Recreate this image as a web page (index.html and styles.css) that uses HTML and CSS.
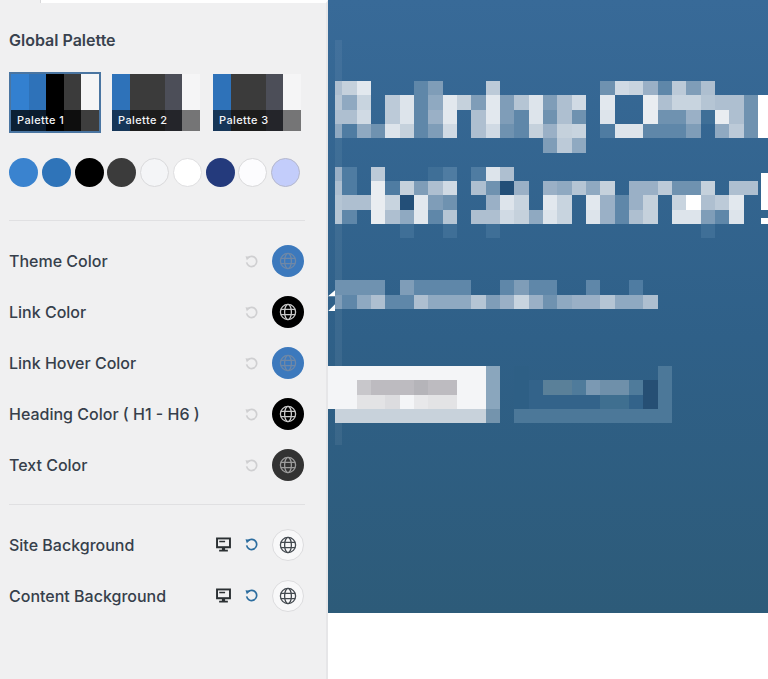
FILE: index.html
```html
<!DOCTYPE html>
<html lang="en">
<head>
    <meta charset="UTF-8">
    <title>Global Palette</title>
    <link rel="stylesheet" href="styles.css">
</head>
<body>
    <svg class="defs" width="0" height="0">
        <symbol id="globe" viewBox="0 0 20 20">
            <g fill="none" stroke="currentColor" stroke-width="1.3">
                <circle cx="10" cy="10" r="7.6"/>
                <ellipse cx="10" cy="10" rx="3.4" ry="7.6"/>
                <path d="M2.8 7.4h14.4M2.8 12.6h14.4"/>
            </g>
        </symbol>
        <symbol id="reset" viewBox="0 0 16 16">
            <path d="M4.2 4.2A5.4 5.4 0 1 1 2.8 9" fill="none" stroke="currentColor" stroke-width="1.8"/>
            <path d="M1.6 2.4l5.2.6-3.8 3.6z" fill="currentColor"/>
        </symbol>
        <symbol id="monitor" viewBox="0 0 16 16">
            <path d="M1 1.5h14v10H9.5v1.4h2.6v1.6H3.9v-1.6h2.6v-1.4H1z" fill="currentColor"/>
            <path d="M2.8 3.2h10.4v6.4H2.8z" fill="#f0f0f1"/>
            <path d="M4 4.5h5.5v1.4H4z" fill="currentColor"/>
        </symbol>
    </svg>

    <div class="page">
        <aside class="panel">
            <h2 class="panel-title">Global Palette</h2>

            <div class="palettes">
                <div class="palette palette-current">
                    <div class="stripes">
                        <span class="c-blue"></span><span class="c-blue2"></span><span class="c-black"></span><span class="c-dark"></span><span class="c-light"></span>
                    </div>
                    <div class="palette-name">Palette 1</div>
                </div>
                <div class="palette">
                    <div class="stripes">
                        <span class="c-blue2"></span><span class="c-dark wide"></span><span class="c-slate"></span><span class="c-light"></span>
                    </div>
                    <div class="palette-name">Palette 2</div>
                </div>
                <div class="palette">
                    <div class="stripes">
                        <span class="c-blue2"></span><span class="c-dark wide"></span><span class="c-slate"></span><span class="c-light"></span>
                    </div>
                    <div class="palette-name">Palette 3</div>
                </div>
            </div>

            <div class="swatches">
                <span class="swatch sw-1"></span>
                <span class="swatch sw-2"></span>
                <span class="swatch sw-3"></span>
                <span class="swatch sw-4"></span>
                <span class="swatch sw-5"></span>
                <span class="swatch sw-6"></span>
                <span class="swatch sw-7"></span>
                <span class="swatch sw-8"></span>
                <span class="swatch sw-9"></span>
            </div>

            <div class="group">
                <div class="row">
                    <span class="label">Theme Color</span>
                    <svg class="ico-reset"><use href="#reset"/></svg>
                    <span class="pick pick-blue"><svg><use href="#globe"/></svg></span>
                </div>
                <div class="row">
                    <span class="label">Link Color</span>
                    <svg class="ico-reset"><use href="#reset"/></svg>
                    <span class="pick pick-black"><svg><use href="#globe"/></svg></span>
                </div>
                <div class="row">
                    <span class="label">Link Hover Color</span>
                    <svg class="ico-reset"><use href="#reset"/></svg>
                    <span class="pick pick-blue"><svg><use href="#globe"/></svg></span>
                </div>
                <div class="row">
                    <span class="label">Heading Color ( H1 - H6 )</span>
                    <svg class="ico-reset"><use href="#reset"/></svg>
                    <span class="pick pick-black"><svg><use href="#globe"/></svg></span>
                </div>
                <div class="row">
                    <span class="label">Text Color</span>
                    <svg class="ico-reset"><use href="#reset"/></svg>
                    <span class="pick pick-dark"><svg><use href="#globe"/></svg></span>
                </div>
            </div>

            <div class="group group-bg">
                <div class="row">
                    <span class="label">Site Background</span>
                    <svg class="ico-monitor"><use href="#monitor"/></svg>
                    <svg class="ico-reset ico-active"><use href="#reset"/></svg>
                    <span class="pick pick-white"><svg><use href="#globe"/></svg></span>
                </div>
                <div class="row">
                    <span class="label">Content Background</span>
                    <svg class="ico-monitor"><use href="#monitor"/></svg>
                    <svg class="ico-reset ico-active"><use href="#reset"/></svg>
                    <span class="pick pick-white"><svg><use href="#globe"/></svg></span>
                </div>
            </div>
        </aside>

        <main class="preview">
            <section class="hero">
                <div class="mosaic line-1">
                    <div class="mrow"><i class="t8"></i><i class="t11"></i><i class="t15"></i><i></i><i></i><i></i><i class="t3"></i><i class="t5"></i><i></i><i></i><i></i><i class="t10"></i><i></i><i></i><i></i><i></i><i></i><i></i><i></i><i class="t4"></i><i class="t13"></i><i class="t12"></i><i class="t7"></i><i class="t3"></i><i class="t10"></i><i class="t5"></i><i class="t8"></i></div>
                    <div class="mrow"><i class="t9"></i><i class="t6"></i><i class="t12"></i><i></i><i class="t10"></i><i class="t14"></i><i class="t3"></i><i class="t6"></i><i class="t15"></i><i class="t11"></i><i class="t5"></i><i class="t15"></i><i class="t5"></i><i class="t9"></i><i class="t14"></i><i class="t5"></i><i class="t8"></i><i class="t13"></i><i></i><i class="t15"></i><i></i><i></i><i class="t16"></i><i class="t8"></i><i class="t12"></i><i class="t12"></i><i class="t9"></i><i class="t8"></i><i class="t8"></i><i class="t4"></i><i class="tw"></i></div>
                    <div class="mrow"><i class="t8"></i><i class="t8"></i><i class="t13"></i><i></i><i class="t10"></i><i class="t14"></i><i class="t3"></i><i class="t7"></i><i class="t15"></i><i></i><i class="t8"></i><i class="t15"></i><i class="t5"></i><i class="t3"></i><i class="t14"></i><i class="t4"></i><i class="t8"></i><i class="t4"></i><i></i><i class="t14"></i><i></i><i></i><i class="t16"></i><i class="t4"></i><i class="t4"></i><i class="t7"></i><i class="t1"></i><i class="t16"></i><i class="t8"></i><i class="t4"></i><i class="tw"></i></div>
                    <div class="mrow"><i class="t6"></i><i class="t2"></i><i class="t6"></i><i class="t4"></i><i class="t14"></i><i class="t11"></i><i class="t3"></i><i class="t5"></i><i class="t13"></i><i></i><i class="t8"></i><i class="t13"></i><i class="t4"></i><i class="t3"></i><i class="t11"></i><i class="t7"></i><i class="t11"></i><i class="t12"></i><i></i><i class="t2"></i><i class="t14"></i><i class="t14"></i><i class="t3"></i><i class="t3"></i><i class="t3"></i><i class="t5"></i><i></i><i class="t6"></i><i class="t10"></i><i class="t4"></i><i class="tw"></i></div>
                    <div class="mrow"><i></i><i></i><i></i><i></i><i></i><i></i><i></i><i></i><i></i><i></i><i></i><i></i><i></i><i></i><i></i><i class="t5"></i><i class="t10"></i><i class="t6"></i></div>
                </div>

                <div class="mosaic line-2">
                    <div class="mrow"><i class="t7"></i><i class="t2"></i><i></i><i class="t10"></i><i></i><i></i><i></i><i class="t1"></i><i class="t2"></i><i></i><i class="t2"></i><i class="t14"></i><i class="t8"></i><i></i><i></i><i></i><i></i><i></i><i></i><i></i><i></i><i></i><i></i><i></i><i></i><i></i><i></i><i></i><i></i><i></i><i class="bang-top"></i></div>
                    <div class="mrow"><i class="t8"></i><i class="t2"></i><i></i><i class="t16"></i><i class="t2"></i><i class="t11"></i><i class="t5"></i><i class="t8"></i><i class="t13"></i><i></i><i class="t8"></i><i class="t4"></i><i class="tk"></i><i class="t7"></i><i></i><i class="t7"></i><i class="t6"></i><i class="t9"></i><i class="t6"></i><i class="t11"></i><i></i><i class="t7"></i><i class="t7"></i><i class="t10"></i><i class="t4"></i><i class="t4"></i><i class="t11"></i><i></i><i class="t8"></i><i class="t8"></i><i class="bang"></i></div>
                    <div class="mrow"><i class="t9"></i><i class="t8"></i><i class="t8"></i><i class="t16"></i><i class="t12"></i><i class="tk"></i><i class="t15"></i><i class="t5"></i><i class="t4"></i><i></i><i></i><i class="t7"></i><i class="t14"></i><i class="t12"></i><i></i><i class="t15"></i><i class="t12"></i><i></i><i class="t15"></i><i class="t7"></i><i class="t3"></i><i class="t7"></i><i class="t11"></i><i></i><i class="t12"></i><i class="tw"></i><i class="t8"></i><i class="t10"></i><i class="t15"></i><i></i><i class="bang"></i></div>
                    <div class="mrow"><i class="t9"></i><i class="t3"></i><i></i><i class="t16"></i><i class="t8"></i><i class="t6"></i><i class="t15"></i><i class="t3"></i><i class="t9"></i><i></i><i class="t8"></i><i class="t8"></i><i class="t13"></i><i class="t11"></i><i class="t6"></i><i class="t14"></i><i class="t12"></i><i></i><i class="t14"></i><i class="t7"></i><i class="t3"></i><i class="t8"></i><i class="t11"></i><i></i><i class="t14"></i><i class="t14"></i><i class="t5"></i><i class="t3"></i><i class="t14"></i><i></i><i class="bang-dot"></i></div>
                    <div class="mrow"><i></i><i></i><i></i><i></i><i></i><i class="t1"></i><i></i><i></i><i class="t1"></i><i></i><i></i><i class="t1"></i><i></i><i></i><i></i><i></i><i></i><i></i><i></i><i></i><i></i><i></i><i></i><i></i><i></i><i></i><i class="t1"></i></div>
                </div>

                <div class="mosaic line-sub">
                    <div class="mrow"><i class="t4"></i><i class="t4"></i><i class="t4"></i><i class="t4"></i><i></i><i class="t5"></i><i class="t3"></i><i class="t3"></i><i class="t3"></i><i class="t3"></i><i></i><i></i><i class="t3"></i><i class="t5"></i><i class="t3"></i><i class="t3"></i><i></i><i></i><i class="t3"></i><i></i><i></i><i class="t2"></i></div>
                    <div class="mrow"><i class="t5"></i><i class="t3"></i><i class="t6"></i><i class="t8"></i><i class="t3"></i><i class="t3"></i><i class="t8"></i><i class="t6"></i><i class="t6"></i><i class="t6"></i><i class="t9"></i><i class="t5"></i><i class="t7"></i><i class="t12"></i><i class="t7"></i><i class="t4"></i><i class="t6"></i><i class="t7"></i><i class="t7"></i><i class="t9"></i><i class="t6"></i><i class="t6"></i><i class="t8"></i></div>
                </div>

                <div class="mosaic mosaic-full line-btn">
                    <div class="mrow"><i class="bw"></i><i class="bw"></i><i class="bw"></i><i class="bw"></i><i class="bw"></i><i class="bw"></i><i class="bw"></i><i class="bw"></i><i class="bw"></i><i class="bw"></i><i class="bw"></i><i class="be"></i><i></i><i class="bd"></i><i></i><i></i><i></i><i></i><i></i><i></i><i></i><i></i><i></i><i class="bo"></i></div>
                    <div class="mrow"><i class="bw"></i><i class="bw"></i><i class="bx1"></i><i class="bx"></i><i class="bx"></i><i class="bx"></i><i class="bx2"></i><i class="bx"></i><i class="bx"></i><i class="bw"></i><i class="bw"></i><i class="be"></i><i></i><i class="bd"></i><i class="bf"></i><i class="g2"></i><i class="g2"></i><i class="g1"></i><i class="g4"></i><i class="g3"></i><i class="g3"></i><i class="g1"></i><i class="bk"></i><i class="bo"></i></div>
                    <div class="mrow"><i class="bw"></i><i class="bw"></i><i class="by"></i><i class="by"></i><i class="by1"></i><i class="bw"></i><i class="by2"></i><i class="by"></i><i class="by"></i><i class="bw"></i><i class="bw"></i><i class="be"></i><i></i><i class="bd"></i><i class="bf"></i><i class="bf"></i><i class="bf"></i><i class="bf"></i><i class="bf"></i><i class="bg"></i><i class="bg"></i><i class="bf"></i><i class="bk"></i><i class="bo"></i></div>
                    <div class="mrow"><i class="bs-half"></i><i class="bs"></i><i class="bs"></i><i class="bs"></i><i class="bs"></i><i class="bs"></i><i class="bs"></i><i class="bs"></i><i class="bs"></i><i class="bs"></i><i class="bs"></i><i class="be2"></i><i></i><i class="bo"></i><i class="bo"></i><i class="bo"></i><i class="bo"></i><i class="bo"></i><i class="bo"></i><i class="bo"></i><i class="bo"></i><i class="bo"></i><i class="bo"></i><i class="bo"></i></div>
                </div>
            </section>
        </main>
    </div>
</body>
</html>
```

FILE: styles.css
```css
* {
    box-sizing: border-box;
}
html, body {
    margin: 0;
    height: 100%;
}
body {
    background: #fff;
    font-family: "Inter", "Liberation Sans", sans-serif;
    overflow: hidden;
}
.defs {
    display: block;
    height: 0;
}
.page {
    display: flex;
    height: 679px;
}

/* left panel */
.panel {
    flex: none;
    width: 328px;
    height: 679px;
    background: #f0f0f1;
    border-right: 2px solid #e6e6e8;
    border-top: 3px solid #fff;
    padding: 27px 0 0 9px;
    position: relative;
}
.panel::before {
    content: "";
    position: absolute;
    left: 0;
    top: -3px;
    width: 40px;
    height: 3px;
    background: #f0f0f1;
    border-right: 1px solid #d8d8da;
}
.panel-title {
    margin: 0;
    font-size: 16px;
    line-height: 20px;
    font-weight: 600;
    color: #39424e;
}
.palettes {
    display: flex;
    align-items: center;
    gap: 11px;
    margin-top: 22px;
}
.palette {
    width: 88px;
    height: 57px;
    position: relative;
    display: flex;
    flex-direction: column;
}
.palette + .palette + .palette {
    margin-left: 2px;
}
.palette-current {
    width: 92px;
    height: 61px;
    border: 2px solid #4a75a1;
}
.stripes {
    display: flex;
    height: 100%;
}
.stripes span {
    flex: 1;
}
.stripes .wide {
    flex: 2;
}
.c-blue { background: #3380d0; }
.c-blue2 { background: #2e72b9; }
.c-black { background: #000; }
.c-dark { background: #3b3b3b; }
.c-slate { background: #4c4e58; }
.c-light { background: #f5f5f6; }
.palette-name {
    position: absolute;
    left: 0;
    right: 0;
    bottom: 0;
    height: 21px;
    padding-left: 6px;
    background: rgba(0, 0, 0, .52);
    color: #f2f4f7;
    font-size: 11px;
    font-weight: 500;
    line-height: 20px;
    letter-spacing: .4px;
}
.palette-current .palette-name {
    background: rgba(0, 0, 0, .75);
}
.swatches {
    display: flex;
    gap: 3.75px;
    margin-top: 25px;
}
.swatch {
    width: 29px;
    height: 29px;
    border-radius: 50%;
    border: 1px solid transparent;
}
.sw-1 { background: #3a83cf; }
.sw-2 { background: #2f74b9; }
.sw-3 { background: #000; }
.sw-4 { background: #3b3b3b; }
.sw-5 { background: #f4f5f7; border-color: #d9d9db; }
.sw-6 { background: #fff; border-color: #dedee0; }
.sw-7 { background: #243a7c; }
.sw-8 { background: #fcfcfe; border-color: #d9d9db; }
.sw-9 { background: #c3cdfb; border-color: #b5b8cc; }

.group {
    width: 296px;
    margin-top: 33px;
    padding-top: 14px;
    padding-right: 1px;
    border-top: 1px solid #e0e0e2;
}
.group-bg {
    margin-top: 14px;
}
.row {
    display: flex;
    align-items: center;
    height: 51px;
}
.label {
    flex: 1;
    font-size: 16px;
    font-weight: 500;
    color: #363f4b;
    white-space: nowrap;
}
.ico-reset {
    width: 15px;
    height: 15px;
    margin: 2px 13px 0 0;
    color: #cfcfd1;
}
.ico-active {
    color: #2c6d9f;
    margin-top: 0;
}
.ico-monitor {
    width: 17px;
    height: 17px;
    margin-right: 12px;
    color: #2b3033;
}
.pick {
    flex: none;
    width: 32px;
    height: 32px;
    border-radius: 50%;
    display: flex;
    align-items: center;
    justify-content: center;
}
.pick svg {
    width: 20px;
    height: 20px;
}
.pick-blue { background: #3c79bd; color: #6f88a6; }
.pick-black { background: #000; color: #c9c9c9; }
.pick-dark { background: #333; color: #9c9c9c; }
.pick-white { background: #f8f8f9; border: 1px solid #dcdcde; color: #444a50; }

/* preview on the right */
.preview {
    flex: 1;
    overflow: hidden;
    background: #fff;
}
.hero {
    height: 613px;
    padding-top: 81px;
    position: relative;
    overflow: hidden;
    background: linear-gradient(#386a98, #2f6088 55%, #2d5b79);
}
.hero::before {
    content: "";
    position: absolute;
    left: 7px;
    top: 40px;
    width: 7px;
    height: 405px;
    background: rgba(255, 255, 255, .06);
}
.mosaic {
    margin-left: 7px;
    position: relative;
    filter: blur(.4px);
}
.mosaic-full {
    margin-left: 0;
}
.mrow {
    display: flex;
    height: 14.33px;
}
.mrow i {
    flex: none;
    width: 14.33px;
}
.mrow i:first-child {
    width: 7.33px;
}
.mosaic-full .mrow i:first-child {
    width: 14.33px;
}
.line-2 {
    margin-top: 14px;
}
.line-sub {
    margin-top: 42px;
}
.line-sub::before {
    content: "";
    position: absolute;
    left: -7px;
    top: 10px;
    width: 7px;
    height: 21px;
    background: #fff;
    clip-path: polygon(100% 0, 0 29%, 100% 29%, 100% 67%, 0 100%, 100% 100%);
}
.line-btn {
    margin-top: 57px;
}

.t1 { background: #3f6f97; }
.t2 { background: #4f7ca2; }
.t3 { background: #5f87a9; }
.t4 { background: #6f92b0; }
.t5 { background: #7f9db8; }
.t6 { background: #8fa9c1; }
.t7 { background: #9ab0c6; }
.t8 { background: #aebfd0; }
.t9 { background: #b5c5d4; }
.t10 { background: #bccad8; }
.t11 { background: #c5d1dc; }
.t12 { background: #c8d4df; }
.t13 { background: #d0dae4; }
.t14 { background: #dde4eb; }
.t15 { background: #e2e8ee; }
.t16 { background: #e9edf1; }
.tw { background: #fff; }
.tk { background: #234f78; }
.bang { background: linear-gradient(90deg, transparent 3px, #fff 3px); }
.bang-top { background: linear-gradient(90deg, transparent 3px, #fff 3px) 0 6px / 100% 9px no-repeat; }
.bang-dot { background: linear-gradient(90deg, transparent 3px, #fff 3px) 0 8px / 100% 7px no-repeat; }

.bw { background: #f4f5f7; }
.bs { background: #c8d2db; }
.bs-half { background: linear-gradient(90deg, transparent 7px, #c8d2db 7px); }
.be { background: #8aa6bd; }
.be2 { background: #7494ad; }
.bx { background: #bdbbc0; }
.bx1 { background: #c8c7cb; }
.bx2 { background: #b5b4b9; }
.by { background: #e3e3e5; }
.by1 { background: #dcdcdf; }
.by2 { background: #e8e8ea; }
.bo { background: #4c7899; }
.bd { background: #2e5f85; }
.bf { background: #33638a; }
.bg { background: #3f6f90; }
.bk { background: #264f74; }
.g1 { background: #4f7b9b; }
.g2 { background: #5a8099; }
.g3 { background: #6f90aa; }
.g4 { background: #7b99b3; }
```
